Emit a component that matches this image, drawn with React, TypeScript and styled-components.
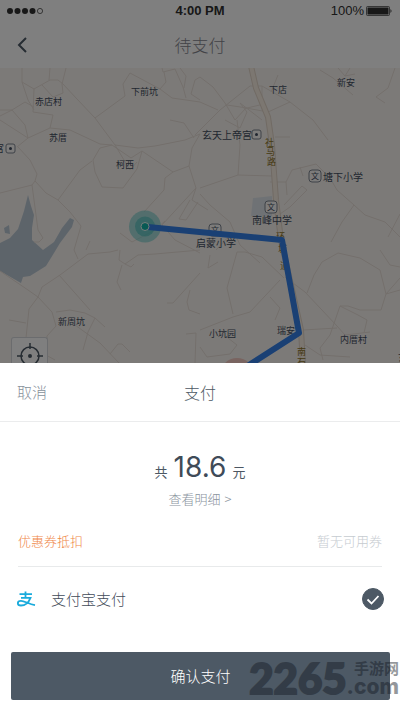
import React from "react";
import styled, { createGlobalStyle } from "styled-components";

const Global = createGlobalStyle`
  * { box-sizing: border-box; }
  body { margin: 0; background: #fff; font-family: "Noto Sans CJK SC", sans-serif; }
  button { border: 0; padding: 0; background: none; font-family: inherit; cursor: pointer; }
`;

const Screen = styled.div`
  min-height: 100vh;
  display: flex;
  flex-direction: column;
`;
const Backdrop = styled.div`
  flex: 1;
  display: flex;
  flex-direction: column;
  position: relative;
  min-height: 240px;
  &::after {
    content: "";
    position: absolute;
    inset: 0;
    background: rgba(0, 0, 0, 0.5);
  }
`;
const StatusBar = styled.div`
  display: grid;
  grid-template-columns: 1fr auto 1fr;
  align-items: center;
  height: 22px;
  padding: 0 7px;
  font: 400 13px/22px "Liberation Sans", sans-serif;
  color: #303030;
`;
const Battery = styled.div`
  display: flex;
  justify-content: flex-end;
  align-items: center;
  gap: 2px;
`;
const Clock = styled.span`
  font-weight: 700;
`;
const NavBar = styled.header`
  display: grid;
  grid-template-columns: 48px 1fr 48px;
  align-items: center;
  height: 46px;
`;
const BackButton = styled.button`
  display: flex;
  padding-left: 16px;
`;
const NavTitle = styled.h1`
  margin: 0;
  text-align: center;
  font-size: 17px;
  line-height: 24px;
  font-weight: 300;
  color: #86878f;
`;
const MapArea = styled.div`
  flex: 1;
  display: grid;
  position: relative;
  overflow: hidden;
  background: #f9f5f1;
`;
const MapDrawing = styled.svg`
  position: absolute;
  width: 100%;
  height: 100%;
`;
const LocateButton = styled.button`
  align-self: end;
  justify-self: start;
  position: relative;
  display: flex;
  justify-content: center;
  padding-top: 4px;
  width: 37px;
  height: 26px;
  margin-left: 11px;
  overflow: hidden;
  background: #fff;
  border: 1px solid #d6d9dc;
  border-bottom: 0;
  border-radius: 3px 3px 0 0;
`;

const Sheet = styled.section`
  display: flex;
  flex-direction: column;
  background: #fff;
`;
const SheetHeader = styled.header`
  display: grid;
  grid-template-columns: 1fr auto 1fr;
  align-items: center;
  height: 59px;
  padding: 0 17px;
  border-bottom: 1px solid #ebeced;
`;
const CancelButton = styled.button`
  justify-self: start;
  font-size: 15px;
  line-height: 24px;
  font-weight: 300;
  color: #87919b;
`;
const SheetTitle = styled.h2`
  margin: 0;
  font-size: 16px;
  line-height: 24px;
  font-weight: 300;
  color: #4c5763;
`;
const Total = styled.div`
  display: flex;
  justify-content: center;
  align-items: baseline;
  gap: 6px;
  height: 36px;
  margin-top: 27px;
  line-height: 24px;
  font-size: 13px;
  color: #4c5763;
`;
const Amount = styled.strong`
  font: 400 28px/36px Inter, sans-serif;
  color: #3f4b58;
`;
const DetailLink = styled.a`
  align-self: center;
  display: flex;
  gap: 4px;
  margin-top: 4px;
  font-size: 13px;
  line-height: 20px;
  font-weight: 300;
  text-decoration: none;
  color: #8a949e;
`;
const CouponRow = styled.div`
  display: flex;
  justify-content: space-between;
  margin: 22px 18px 0;
  padding-bottom: 15px;
  border-bottom: 1px solid #e8eaeb;
  font-size: 13px;
  line-height: 20px;
  font-weight: 300;
`;
const CouponLabel = styled.span`
  color: #ef8748;
`;
const CouponValue = styled.span`
  color: #c6cbd0;
`;
const MethodRow = styled.label`
  display: flex;
  align-items: center;
  margin: 20px 16px 0;
  height: 24px;
  font-size: 15px;
  line-height: 22px;
  font-weight: 300;
  color: #3f4b58;
  cursor: pointer;
`;
const MethodName = styled.span`
  flex: 1;
  margin-left: 15px;
`;
const MethodRadio = styled.input`
  appearance: none;
  width: 22px;
  height: 22px;
  margin: 0;
  border-radius: 50%;
  border: 1px solid #4d5965;
  &:checked {
    background: #4d5965
      url("data:image/svg+xml,%3Csvg xmlns='http://www.w3.org/2000/svg' viewBox='0 0 20 20'%3E%3Cpath d='M4.500 10.500l4 4L15.500 7' fill='none' stroke='white' stroke-width='1.8'/%3E%3C/svg%3E")
      center / 20px 20px no-repeat;
  }
`;
const Footer = styled.footer`
  position: relative;
  padding: 41px 10px 11px 11px;
`;
const ConfirmButton = styled.button`
  display: block;
  width: 100%;
  height: 48px;
  border-radius: 2px;
  background: #4d5965;
  color: #fff;
  font-size: 15px;
  line-height: 22px;
  font-weight: 300;
`;
const Watermark = styled.div`
  position: absolute;
  right: 1px;
  bottom: 15px;
  display: flex;
  align-items: flex-end;
  color: #141a24;
  opacity: 0.45;
  pointer-events: none;
`;
const WatermarkNumber = styled.span`
  font: 900 42px/36px Lato, sans-serif;
  -webkit-text-stroke: 2px #141a24;
`;
const WatermarkSide = styled.span`
  display: flex;
  flex-direction: column;
  align-items: flex-end;
  font-size: 15px;
  line-height: 20px;
  font-weight: 700;
`;
const WatermarkDomain = styled.span`
  font: 800 21px/18px Inter, sans-serif;
`;

const lanes = [
  "22,68 22,82 34,89 50,80 58,80 63,84 77,99 95,118 115,145 138,148 155,146 185,140 200,134",
  "50,68 49,80", "66,68 62,84 63,93", "22,82 28,100 34,110", "42,85 53,97 63,93",
  "34,89 33,112 53,115 50,128 28,138 0,120", "0,110 12,110 25,102 34,107", "0,116 12,110 25,125 28,138 17,147",
  "95,118 125,96 123,84 130,73 160,89 172,98 200,102 218,110",
  "162,68 163,72 175,69 183,87 186,98", "164,72 166,82 160,89", "180,68 186,76 184,88", "200,100 191,94 195,80 200,77",
  "200,77 213,87 225,103 235,120", "195,135 220,110 250,86 262,86 262,100", "271,92 278,75",
  "235,120 246,108 268,112 290,102 262,86", "290,102 313,120 328,140", "225,120 240,128 247,112 240,103 262,120", "227,105 247,108 264,104",
  "320,70 333,78 353,95", "338,68 345,76 355,74", "395,68 388,88 376,97 385,103", "345,76 350,68",
  "50,128 70,130 100,144 112,145 131,158 142,151 137,169 123,188 102,187 95,172 93,160 100,148 112,145",
  "92,161 80,170 58,200 46,193 35,181 37,174 30,160 18,147", "0,193 32,185 35,181", "32,185 36,215 38,230 43,238 39,242 34,242",
  "58,200 70,212 81,226 74,250", "142,151 173,172 165,178 164,190 144,212", "115,145 130,170 137,162",
  "173,172 189,166 196,188 162,225", "189,166 192,148 200,134", "170,120 184,123 194,138", "196,188 192,200 208,210",
  "162,225 175,240 200,253", "190,200 179,219 186,220 198,202", "120,233 132,242 155,230 165,221", "86,250 90,241",
  "200,188 238,175 272,176", "237,120 240,145 238,175", "200,194 210,205 230,222 240,245 260,263",
  "270,182 286,182 292,170 316,164 320,168 330,178 337,190 354,205 365,215 385,222 400,237",
  "287,195 286,182", "300,167 303,176", "354,205 342,222 331,242", "284,205 302,186 307,190 290,207 280,214",
  "400,214 388,237", "275,137 290,137", "216,250 230,235 242,236",
  "0,271 28,290 38,297 52,312 56,326 47,336 46,355 55,360", "38,297 29,309 26,338", "9,320 26,323",
  "38,297 42,287 60,275 88,254 110,252 118,250", "59,275 90,310", "74,250 78,259", "56,312 70,310 85,313 95,318 105,327",
  "95,318 88,332 83,350", "75,325 100,343 120,364", "110,354 118,344 122,344 130,352",
  "120,250 119,260 125,264 138,255 155,254 200,250", "125,264 131,267 134,264", "122,265 117,282 121,290",
  "200,273 173,303 167,303", "190,290 187,302 189,310 200,314", "186,334 196,333 195,363",
  "285,277 305,292 337,326 345,335 370,332", "307,293 314,275 322,262 338,253 360,258 380,270 386,294 400,278",
  "386,294 381,310 360,310 348,306 340,306 330,335 320,348 323,360", "280,280 250,312 233,317 200,330",
  "233,314 227,288 232,270 237,252 245,252 262,257 284,278", "270,297 280,308 275,320", "340,306 358,315 367,320 364,333",
  "200,347 207,357 230,354 237,345 228,338", "303,330 337,328", "305,345 320,355 350,357",
  "218,262 208,268 210,255", "380,250 390,265 400,267", "400,290 386,294",
];

const labels: [number, number, string][] = [
  [35, 105, "赤店村"], [131, 95, "下前坑"], [269, 93, "下店"], [337, 86, "新安"],
  [49, 141, "苏厝"], [116, 168, "柯西"], [58, 325, "新周坑"], [209, 337, "小坑园"],
  [277, 334, "瑞安"], [340, 343, "内厝村"], [398, 361, "玄"],
];
const places: [number, number, string][] = [
  [202, 139, "玄天上帝宫"], [323, 181, "塘下小学"], [252, 224, "南峰中学"], [196, 247, "启蒙小学"], [-6, 152, "宫"],
];
const roadNames: [number, number, string][] = [
  [265, 146, "社"], [266, 155, "马"], [267, 165, "路"], [276, 240, "环"], [278, 252, "城"], [280, 269, "道"], [297, 355, "南"], [297, 365, "石"],
];
const mainRoad = "M251 66L256 88 268 117 272 145 276 200 281 240 301 330 303 365";

const School = ({ x, y }: { x: number; y: number }) => (
  <g>
    <rect x={x} y={y} width="12" height="12" rx="3" fill="#fbf9f7" stroke="#7d8490" />
    <text x={x + 2} y={y + 9} fontSize="8" fill="#434d60">文</text>
  </g>
);
const Poi = ({ x, y }: { x: number; y: number }) => (
  <g>
    <rect x={x} y={y} width="9" height="9" rx="2" fill="#fbf9f7" stroke="#7d8490" />
    <circle cx={x + 4.5} cy={y + 4.5} r="1.5" fill="#434d60" />
  </g>
);

const CityMap = () => (
  <MapDrawing viewBox="0 68 400 295" preserveAspectRatio="xMidYMin slice" aria-label="地图">
    <g fill="#bbc9d5">
      <path d="M28 195L31 206 34 215 32 228 32 240 43 250 54 242 62 228 70 218 74 220 72 227 60 243 54 253 46 266 38 271 30 276 23 277 21 283 0 271V243L10 238 18 229 24 211Z" />
      <path d="M4 228L9 225 10 234 5 233Z" />
      <path d="M253 198L272 196V216H251Z" fill="#dfe5ea" />
    </g>
    <g fill="none" stroke="#e8dfd8" strokeWidth="1">
      {lanes.map((points) => <polyline key={points} points={points} />)}
    </g>
    <g fill="none" strokeLinejoin="round">
      <path d={mainRoad} stroke="#e2d5c8" strokeWidth="6" />
      <path d={mainRoad} stroke="#f8eee3" strokeWidth="4" />
    </g>
    <g fill="#434d60" fontSize="9">
      {labels.map(([x, y, name]) => <text key={name} x={x} y={y}>{name}</text>)}
    </g>
    <g fill="#434d60" fontSize="10">
      {places.map(([x, y, name]) => <text key={name} x={x} y={y}>{name}</text>)}
    </g>
    <g fill="#8d7428" fontSize="9">
      {roadNames.map(([x, y, name]) => <text key={name} x={x} y={y}>{name}</text>)}
    </g>
    <Poi x={252} y={130} />
    <Poi x={6} y={144} />
    <School x={309} y={170} />
    <School x={265} y={201} />
    <School x={209} y={224} />
    <circle cx="237" cy="375" r="17" fill="#efaaa0" opacity=".6" />
    <circle cx="145" cy="226.500" r="16" fill="#53c5c4" opacity=".5" />
    <circle cx="145" cy="226.500" r="10" fill="#35b9b5" opacity=".5" />
    <path d="M148 227L282 240 299 333 246 367" fill="none" stroke="#3480e8" strokeWidth="6" strokeLinejoin="round" />
    <circle cx="145" cy="226.500" r="4" fill="#10b4a8" stroke="#eef8f5" />
  </MapDrawing>
);

const AlipayIcon = () => (
  <svg width="20" height="18" viewBox="0 0 20 18" fill="none" stroke="#1aabdc" strokeWidth="1.800" aria-hidden="true">
    <path d="M3.500 4.200H16M9.500 1.500V7.700M5 7.800H14.500C13 11.500 9.500 15.500 5 15.500 .800 15.500 .800 10.800 5 10.800 8.500 10.800 12.500 14 19 15.200" />
  </svg>
);

export default function App() {
  return (
    <Screen>
      <Global />
      <Backdrop>
        <StatusBar>
          <svg width="36" height="8" viewBox="0 0 36 8" fill="#303030" aria-label="信号">
            <circle cx="3" cy="4" r="3" /><circle cx="10.500" cy="4" r="3" /><circle cx="18" cy="4" r="3" /><circle cx="25.500" cy="4" r="3" />
            <circle cx="33" cy="4" r="2.600" fill="none" stroke="#303030" strokeWidth=".7" />
          </svg>
          <Clock>4:00 PM</Clock>
          <Battery>
            100%
            <svg width="27" height="10" viewBox="0 0 27 10" fill="#303030" aria-hidden="true">
              <rect x=".5" y=".5" width="23" height="9" rx="1" fill="none" stroke="#303030" strokeWidth=".7" />
              <rect x="1.500" y="1.500" width="21" height="7" /><path d="M24.500 3Q26.500 5 24.500 7Z" />
            </svg>
          </Battery>
        </StatusBar>
        <NavBar>
          <BackButton aria-label="返回">
            <svg width="14" height="16" viewBox="0 0 14 16" fill="none" stroke="#4c5965" strokeWidth="2"><path d="M10 1L3 8 10 15" /></svg>
          </BackButton>
          <NavTitle>待支付</NavTitle>
        </NavBar>
        <MapArea>
          <CityMap />
          <LocateButton aria-label="定位">
            <svg width="28" height="28" viewBox="0 0 28 28" fill="none" stroke="#4c5965" strokeWidth="1.500">
              <circle cx="14" cy="14" r="9" /><circle cx="14" cy="14" r="2" fill="#4c5965" stroke="none" />
              <path d="M14 1V7M14 21V27M1 14H7M21 14H27" />
            </svg>
          </LocateButton>
        </MapArea>
      </Backdrop>
      <Sheet>
        <SheetHeader>
          <CancelButton>取消</CancelButton>
          <SheetTitle>支付</SheetTitle>
        </SheetHeader>
        <Total>共<Amount>18.6</Amount>元</Total>
        <DetailLink href="#detail">查看明细<span>&gt;</span></DetailLink>
        <CouponRow>
          <CouponLabel>优惠券抵扣</CouponLabel>
          <CouponValue>暂无可用券</CouponValue>
        </CouponRow>
        <MethodRow>
          <AlipayIcon />
          <MethodName>支付宝支付</MethodName>
          <MethodRadio type="radio" name="method" defaultChecked />
        </MethodRow>
        <Footer>
          <ConfirmButton>确认支付</ConfirmButton>
          <Watermark>
            <WatermarkNumber>2265</WatermarkNumber>
            <WatermarkSide>手游网<WatermarkDomain>.com</WatermarkDomain></WatermarkSide>
          </Watermark>
        </Footer>
      </Sheet>
    </Screen>
  );
}
